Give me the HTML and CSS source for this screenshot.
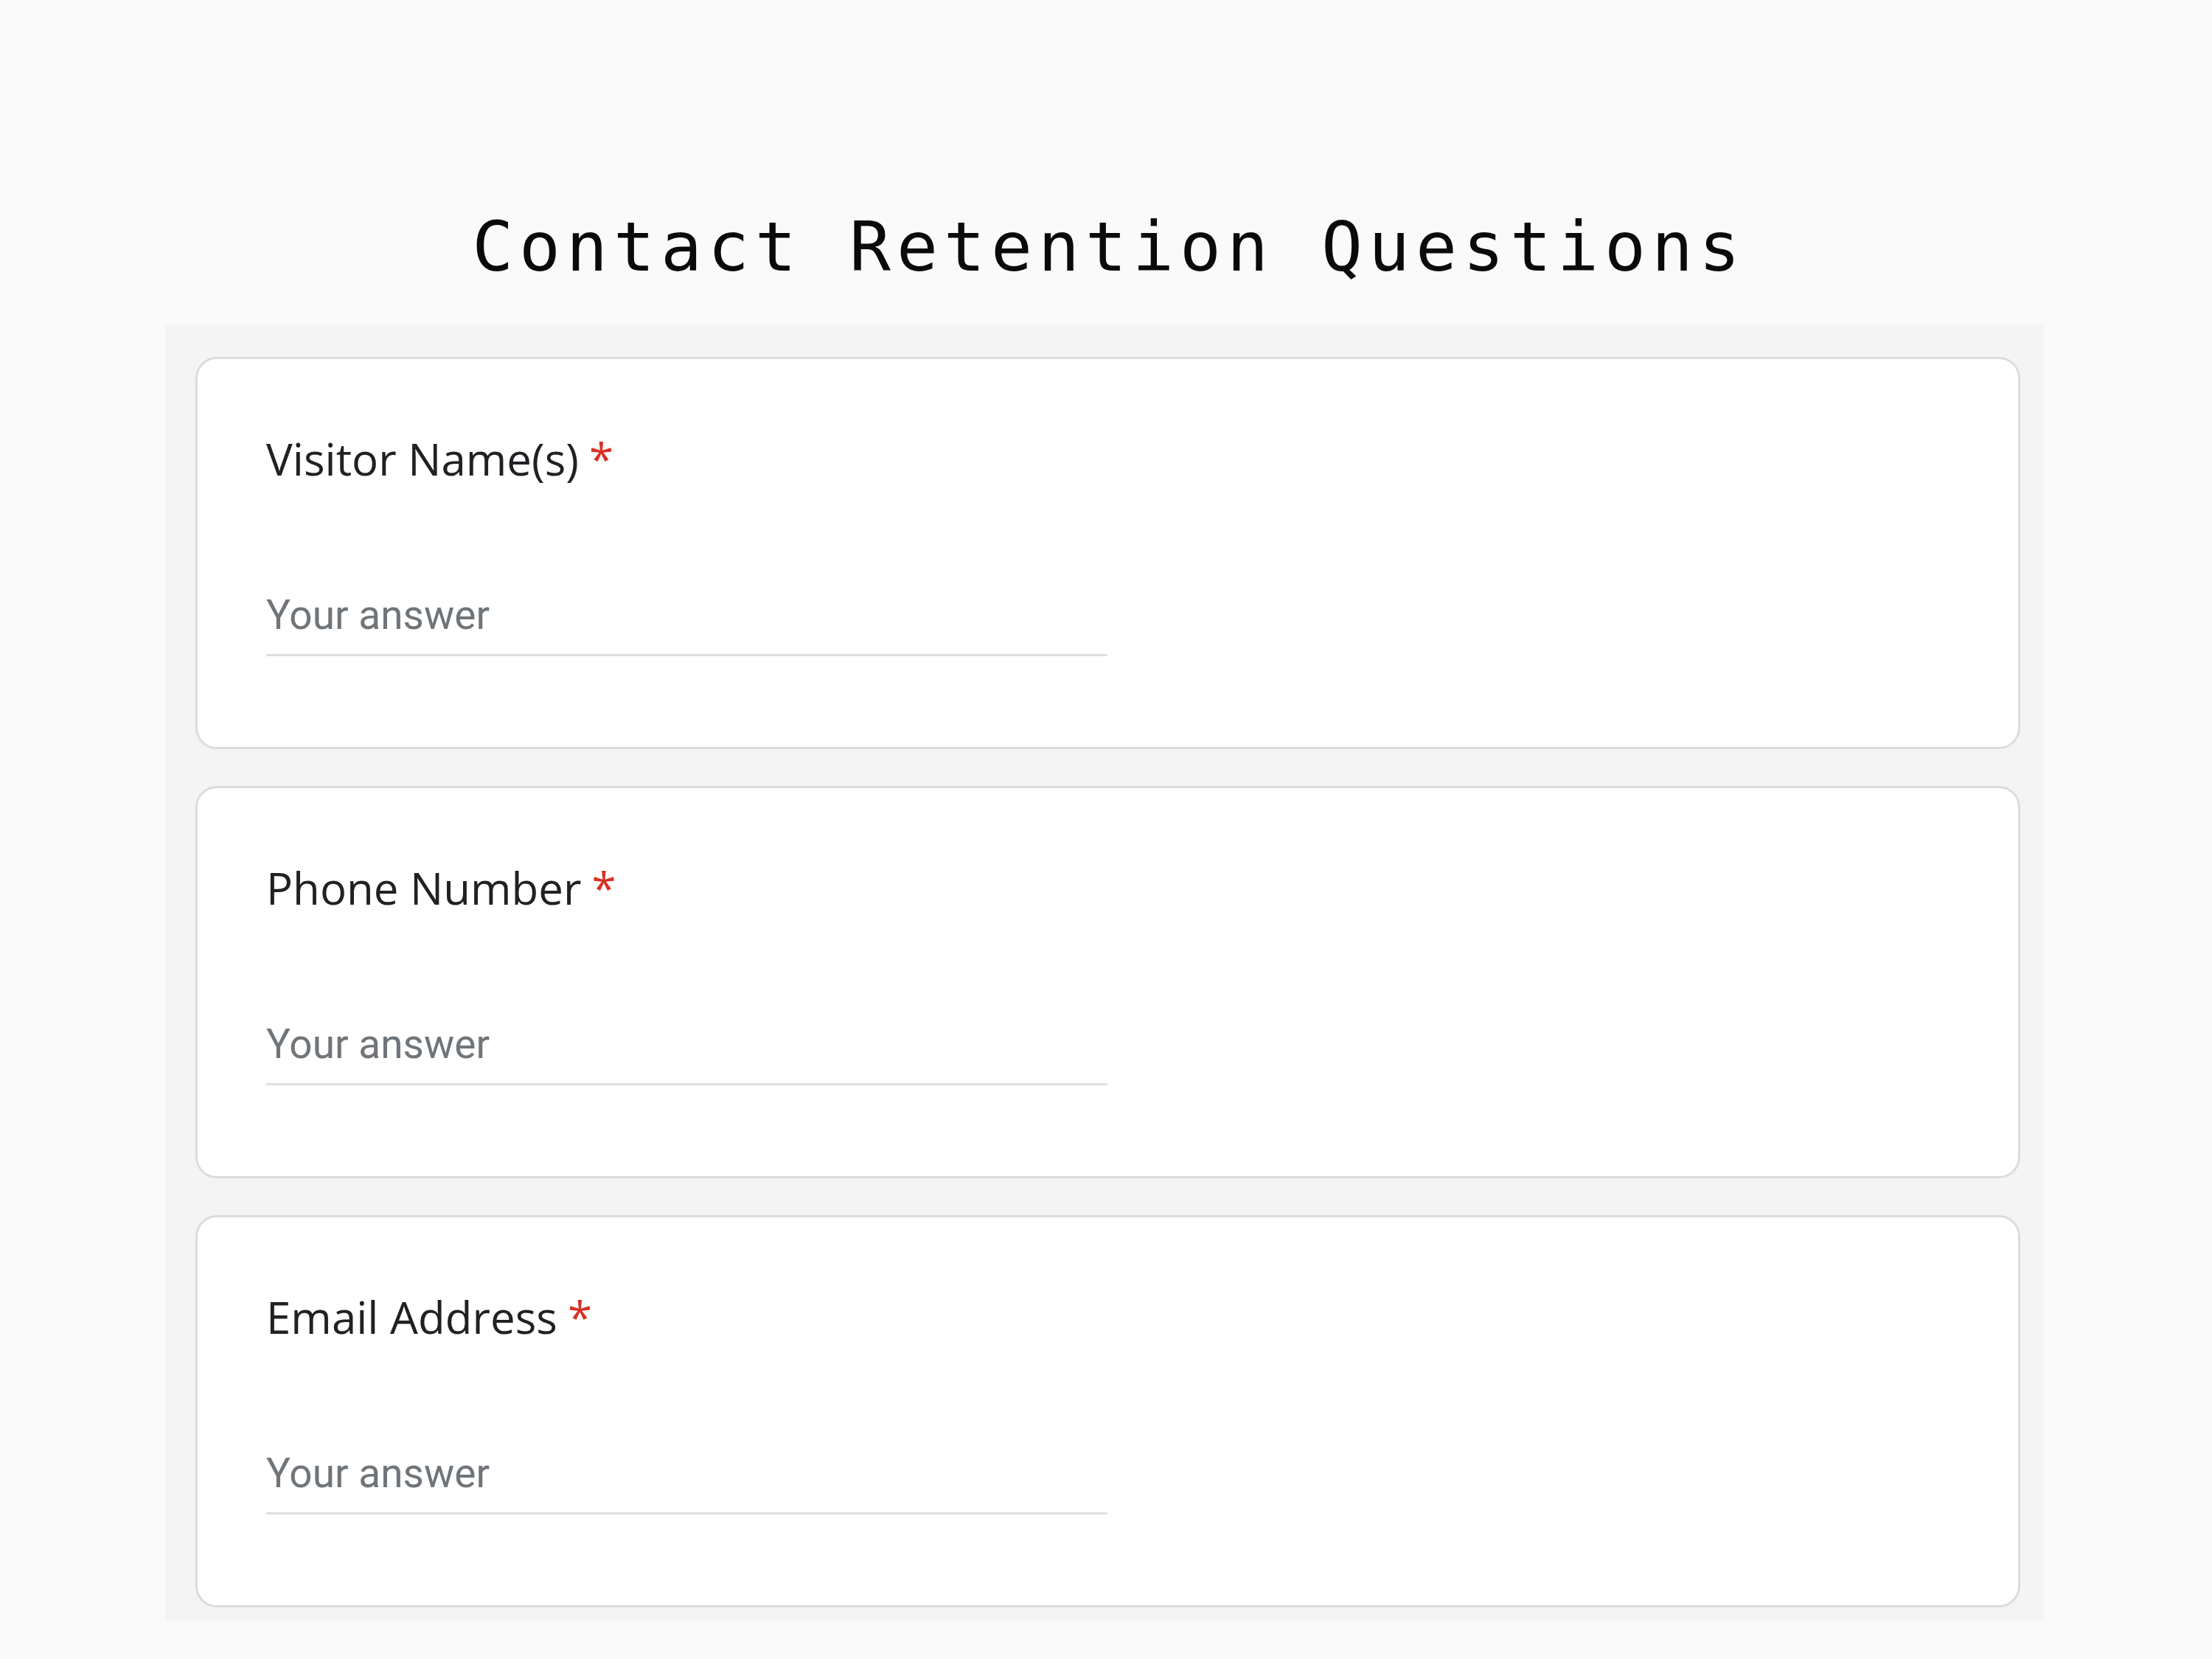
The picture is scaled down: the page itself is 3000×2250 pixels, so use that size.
FILE: index.html
```html
<!DOCTYPE html>
<html lang="en">
<head>
<meta charset="utf-8">
<title>Contact Retention Questions</title>
<link rel="stylesheet" href="styles.css">
</head>
<body>
<main class="page">
  <h1 class="title">Contact Retention Questions</h1>
  <section class="panel">
    <div class="card">
      <div class="label">Visitor Name(s)<span class="req">*</span></div>
      <div class="answer">Your answer</div>
    </div>
    <div class="card">
      <div class="label">Phone Number<span class="req">*</span></div>
      <div class="answer">Your answer</div>
    </div>
    <div class="card">
      <div class="label">Email Address<span class="req">*</span></div>
      <div class="answer">Your answer</div>
    </div>
  </section>
</main>
</body>
</html>
```
FILE: styles.css
```css
html, body {
  margin: 0;
  padding: 0;
  background: #fbfafa;
}
.page {
  width: 3000px;
  min-height: 2250px;
  padding-top: 279px;
  box-sizing: border-box;
}
.title {
  margin: 0;
  font-family: "DejaVu Sans Mono", "Liberation Mono", monospace;
  font-weight: normal;
  font-size: 93px;
  line-height: 112px;
  letter-spacing: 8px;
  padding-left: 8px;
  text-align: center;
  color: #0a0a0a;
}
.panel {
  margin: 49px 0 0 224px;
  width: 2548px;
  box-sizing: border-box;
  background: #f4f4f4;
  padding: 44px 32px 18px 41px;
  display: flex;
  flex-direction: column;
  gap: 50px;
}
.card {
  background: #ffffff;
  border: 3px solid #dadce0;
  border-radius: 29px;
  padding: 99px 96px 123px 93px;
  display: flex;
  flex-direction: column;
}
.label {
  font-family: "Open Sans", "Noto Sans", sans-serif;
  font-size: 60px;
  line-height: 72px;
  color: #202124;
}
.req {
  color: #d93025;
  margin-left: 14px;
}
.answer {
  margin-top: 143px;
  width: 1141px;
  font-family: Roboto, "Liberation Sans", sans-serif;
  font-size: 55px;
  line-height: 67px;
  color: #70757a;
  padding-bottom: 19px;
  border-bottom: 3px solid #dfdfe1;
}
```
